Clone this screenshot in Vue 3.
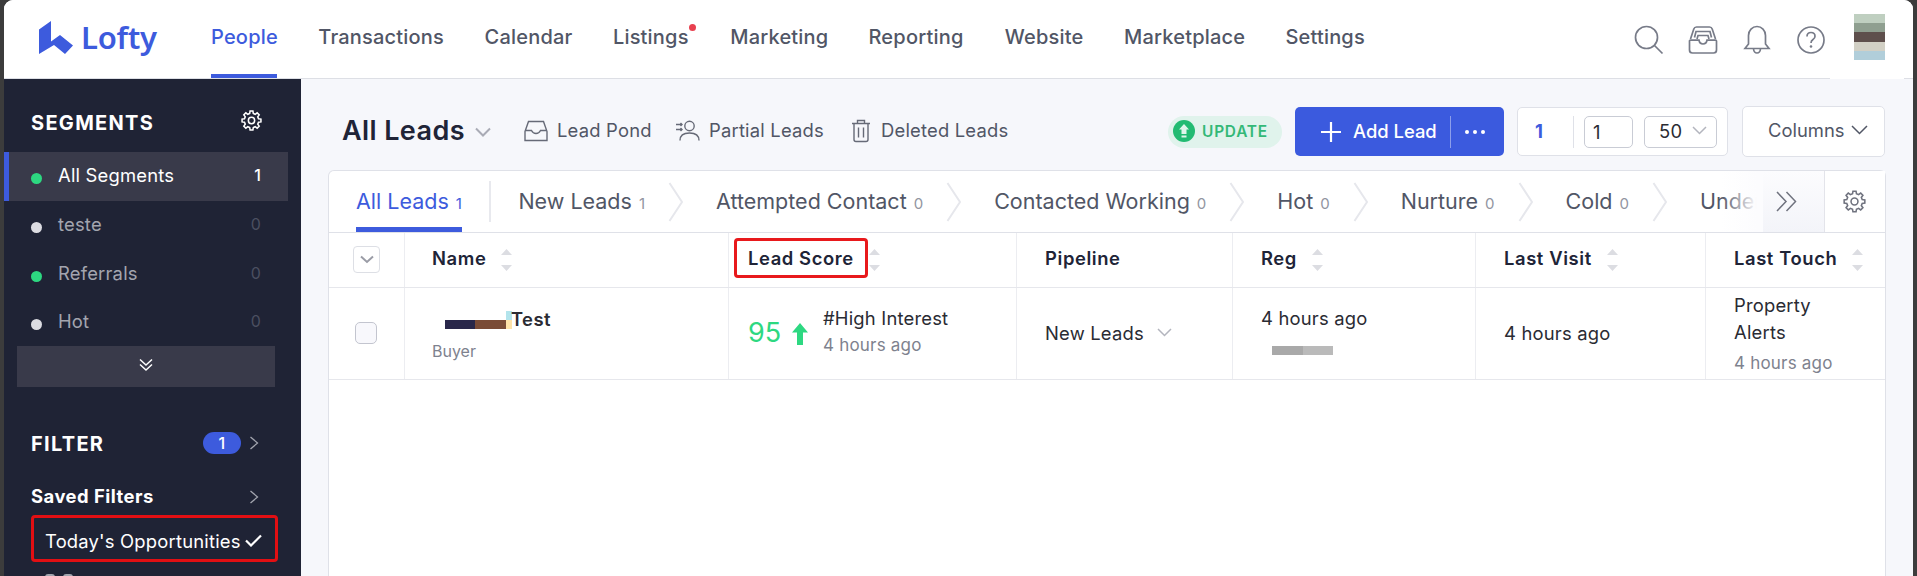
<script setup>
// Main navigation of the CRM
const navItems = [
  { label: 'People', width: 66, active: true },
  { label: 'Transactions', width: 125 },
  { label: 'Calendar', width: 87 },
  { label: 'Listings', width: 76, dot: true },
  { label: 'Marketing', width: 97 },
  { label: 'Reporting', width: 95 },
  { label: 'Website', width: 78 },
  { label: 'Marketplace', width: 120 },
  { label: 'Settings', width: 81 },
]

const segments = [
  { label: 'All Segments', count: 1, color: '#2dd881', active: true },
  { label: 'teste', count: 0, color: '#dcdce2' },
  { label: 'Referrals', count: 0, color: '#2dd881' },
  { label: 'Hot', count: 0, color: '#dcdce2' },
]

// Pipeline stages after the "All Leads" tab
const stages = [
  { label: 'New Leads', count: 1 },
  { label: 'Attempted Contact', count: 0 },
  { label: 'Contacted Working', count: 0 },
  { label: 'Hot', count: 0 },
  { label: 'Nurture', count: 0 },
  { label: 'Cold', count: 0 },
]

const columns = [
  { label: 'Name', sort: true },
  { label: 'Lead Score', sort: true, marked: true },
  { label: 'Pipeline' },
  { label: 'Reg', sort: true },
  { label: 'Last Visit', sort: true },
  { label: 'Last Touch', sort: true },
]

const avatarStripes = ['#bfcfc0', '#8f9f90', '#5e4f4c', '#d2d0c5', '#b1ceda']

// Shared outline of the gear icon
const gearPath = (() => {
  const points = []
  for (let i = 0; i < 8; i++) {
    const base = (i * Math.PI) / 4
    for (const [offset, radius] of [
      [-0.25, 7.6],
      [-0.15, 10],
      [0.15, 10],
      [0.25, 7.6],
    ]) {
      const x = 11 + radius * Math.sin(base + offset)
      const y = 11 - radius * Math.cos(base + offset)
      points.push(`${x.toFixed(2)} ${y.toFixed(2)}`)
    }
  }
  return `M${points.join('L')}Z`
})()
</script>

<template>
  <div class="window">
    <header class="topbar">
      <div class="logo">
        <svg width="34" height="34" viewBox="0 0 34 34">
          <path d="M0 8.5 12 0V20.5L21 14 34 24.5 26 33 15 24 0 33Z" fill="#3d5bdd" />
        </svg>
        <span class="logo-text">Lofty</span>
      </div>

      <nav class="nav">
        <a
          v-for="item in navItems"
          :key="item.label"
          class="nav-item"
          :class="{ active: item.active }"
          :style="{ width: item.width + 'px' }"
        >
          {{ item.label }}
          <i v-if="item.dot" class="nav-dot"></i>
        </a>
      </nav>

      <div class="tools">
        <svg width="30" height="30" viewBox="0 0 30 30">
          <circle cx="12.5" cy="12.5" r="11" />
          <path d="M20.5 20.5 28.5 28.5" />
        </svg>
        <svg width="30" height="30" viewBox="0 0 30 30">
          <path d="M1.5 16V25q0 3 3 3H25.500q3 0 3-3V16q0-.8-1-.8H19q-.5 3.800-4 3.800t-4-3.800H2.500q-1 0-1 .8Z" />
          <path d="M2.500 14 5.800 4q.7-2 2.700-2h13q2 0 2.700 2L27.500 14M6.500 12.500 8 6.500H22L23.500 12.500M9 14 10 10.500H20L21 14" />
        </svg>
        <svg width="30" height="30" viewBox="0 0 30 30">
          <path d="M3 23.5H27L23.5 19V10.500a8.500 9 0 0 0-17 0V19ZM11.500 24q.5 4 3.500 4t3.500-4" />
        </svg>
        <svg width="30" height="30" viewBox="0 0 30 30">
          <circle cx="15" cy="15" r="13" />
          <path d="M11 11.500q0-4 4-4t4 3.700q0 2-2 3.300t-2 3.500" />
          <circle class="solid" cx="15" cy="21.5" r="1.300" />
        </svg>
      </div>

      <div class="avatar-box">
        <div class="avatar">
          <i v-for="c in avatarStripes" :key="c" :style="{ background: c }"></i>
        </div>
      </div>
    </header>

    <div class="body">
      <aside class="sidebar">
        <div class="side-title">
          <span>SEGMENTS</span>
          <svg width="21" height="21" viewBox="0 0 22 22">
            <path :d="gearPath" />
            <circle cx="11" cy="11" r="3.300" />
          </svg>
        </div>

        <ul class="segments">
          <li v-for="s in segments" :key="s.label" :class="{ active: s.active }">
            <i class="seg-dot" :style="{ background: s.color }"></i>
            <span class="seg-label">{{ s.label }}</span>
            <span class="seg-count">{{ s.count }}</span>
          </li>
        </ul>

        <div class="expand">
          <svg width="14" height="14" viewBox="0 0 14 14">
            <path d="M1 1.500 7 7 13 1.500M1 6.500 7 12 13 6.500" />
          </svg>
        </div>

        <div class="filter-title">
          <span class="filter-name">FILTER</span>
          <span class="pill">1</span>
          <svg width="10" height="14" viewBox="0 0 10 14"><path d="M1.500 1 8.500 7 1.500 13" /></svg>
        </div>

        <div class="saved-title">
          <span>Saved Filters</span>
          <svg width="10" height="14" viewBox="0 0 10 14"><path d="M1.500 1 8.500 7 1.500 13" /></svg>
        </div>

        <div class="saved-item">
          <span>Today's Opportunities</span>
          <svg width="17" height="13" viewBox="0 0 17 13"><path d="M1 6.500 6 11.500 16 1.500" /></svg>
        </div>
        <!-- Upper edge of the next filter, mostly below the fold -->
        <div class="saved-next"><i></i><i></i></div>
      </aside>

      <main class="content">
        <div class="toolbar">
          <h1>All Leads</h1>
          <svg class="title-arrow" width="16" height="10" viewBox="0 0 16 10">
            <path d="M1 1.500 8 8.500 15 1.500" />
          </svg>

          <a class="link pond">
            <svg width="24" height="22" viewBox="0 0 24 22">
              <path d="M1 11.500 4.500 1.500H19.500L23 11.500V20.500H1ZM1 10.500H7.500Q9 13.500 12 13.500T16.500 10.500H23" />
            </svg>
            Lead Pond
          </a>
          <a class="link partial">
            <svg width="24" height="22" viewBox="0 0 24 22">
              <circle cx="13.5" cy="6" r="4.700" />
              <path d="M4 20.500q0-7.500 9.500-7.500t9.500 7.500M0 4.500H6M0 9.500H6M4.500 3 6 4.500 4.500 6M4.500 8 6 9.500 4.500 11" />
            </svg>
            Partial Leads
          </a>
          <a class="link deleted">
            <svg width="20" height="24" viewBox="0 0 20 24">
              <path d="M1 4.500H19M6.500 4.500V1.500H13.500V4.500M3 4.500V20.500q0 2 2 2H15q2 0 2-2V4.500M7.500 8.500V18.500M12.500 8.500V18.500" />
            </svg>
            Deleted Leads
          </a>

          <span class="update">
            <svg width="22" height="22" viewBox="0 0 22 22">
              <circle cx="11" cy="11" r="11" fill="#22bb72" />
              <path d="M11 4 16 9.500H13.500V14H8.500V9.500H6ZM8.500 15.500H13.500V17.500H8.500Z" fill="#dff5ea" />
            </svg>
            UPDATE
          </span>

          <button type="button" class="add-lead">
            <svg width="20" height="20" viewBox="0 0 20 20"><path d="M10 0V20M0 10H20" /></svg>
            <span class="add-text">Add Lead</span>
            <span class="add-more"><i></i><i></i><i></i></span>
          </button>

          <div class="pager">
            <b class="pager-current">1</b>
            <span class="pager-input">1</span>
            <span class="pager-select">
              50
              <svg width="15" height="9" viewBox="0 0 15 9"><path d="M1 1 7.500 7.500 14 1" /></svg>
            </span>
          </div>

          <button type="button" class="columns-button">
            Columns
            <svg width="17" height="10" viewBox="0 0 17 10"><path d="M1 1 8.500 8.500 16 1" /></svg>
          </button>
        </div>

        <section class="panel">
          <div class="tabs">
            <div class="tab all">All Leads<small>1</small></div>
            <i class="tab-line"></i>
            <template v-for="s in stages" :key="s.label">
              <div class="tab">{{ s.label }}<small>{{ s.count }}</small></div>
              <svg class="tab-arrow" width="16" height="40" viewBox="0 0 16 40">
                <path d="M1.500 1 14 20 1.500 39" />
              </svg>
            </template>
            <div class="tab">Under</div>

            <!-- Fades out the stages that do not fit -->
            <div class="tabs-end">
              <div class="tabs-fade"></div>
              <div class="tabs-more">
                <svg width="21" height="21" viewBox="0 0 21 21">
                  <path d="M1 1 10 10.500 1 20M10.500 1 19.500 10.500 10.500 20" />
                </svg>
              </div>
              <div class="tabs-gear">
                <svg width="23" height="23" viewBox="0 0 22 22">
                  <path :d="gearPath" />
                  <circle cx="11" cy="11" r="3.300" />
                </svg>
              </div>
            </div>
          </div>

          <div class="grid head">
            <div class="cell check">
              <span class="check-all">
                <svg width="14" height="9" viewBox="0 0 14 9"><path d="M1 1.500 7 7 13 1.500" /></svg>
              </span>
            </div>
            <div v-for="c in columns" :key="c.label" class="cell" :class="{ score: c.marked }">
              <span class="head-label" :class="{ marked: c.marked }">{{ c.label }}</span>
              <svg v-if="c.sort" class="sort" width="11" height="22" viewBox="0 0 11 22">
                <path d="M0 6 5.500 0 11 6ZM0 16H11L5.500 22Z" />
              </svg>
            </div>
          </div>

          <div class="grid row">
            <div class="cell check"><span class="check-box"></span></div>
            <div class="cell name">
              <div class="name-line">
                <i class="mask navy"></i>
                <i class="mask brown"></i>
                <i class="mask tip"></i>
                <b>Test</b>
              </div>
              <div class="buyer">Buyer</div>
            </div>
            <div class="cell score">
              <span class="score-value">95</span>
              <svg width="16" height="22" viewBox="0 0 16 22">
                <path d="M8 0 16 9.500H11V22H5V9.500H0Z" fill="#2dd881" />
              </svg>
              <div class="score-text">
                <div>#High Interest</div>
                <div class="muted">4 hours ago</div>
              </div>
            </div>
            <div class="cell pipeline">
              New Leads
              <svg width="15" height="9" viewBox="0 0 15 9"><path d="M1 1 7.500 7.500 14 1" /></svg>
            </div>
            <div class="cell reg">
              <div>4 hours ago</div>
              <div class="reg-mask"><i></i><i></i></div>
            </div>
            <div class="cell">4 hours ago</div>
            <div class="cell touch">
              <div>Property<br />Alerts</div>
              <div class="muted">4 hours ago</div>
            </div>
          </div>
        </section>
      </main>
    </div>
  </div>
</template>

<style>
body {
  background: #3c3c3c;
}
</style>

<style scoped>
* {
  box-sizing: border-box;
}

svg {
  flex-shrink: 0;
  fill: none;
}

.window {
  display: flex;
  flex-direction: column;
  width: 1909px;
  height: 576px;
  margin-left: 4px;
  overflow: hidden;

  border-radius: 9px 9px 0 0;
  background: #f6f7fb;

  color: #2a2b33;
  font-family: Inter, 'Liberation Sans', sans-serif;
  font-size: 18.4px;
  letter-spacing: 0.2px;
  white-space: nowrap;
}

/* ---------- Top bar ---------- */

.topbar {
  display: flex;
  flex-shrink: 0;
  height: 79px;

  border-bottom: 1px solid #dddfe5;
  background: #fff;
}

.logo {
  display: flex;
  width: 207px;
  padding: 21px 0 0 35px;
}

.logo-text {
  margin: -6px 0 0 8px;

  color: #3d5bdd;
  font-family: 'Noto Sans', sans-serif;
  font-size: 31px;
  font-weight: 600;
  line-height: 44px;
  letter-spacing: -0.3px;
}

.nav {
  display: flex;
  gap: 41.3px;
}

.nav-item {
  position: relative;
  height: 78px;

  color: #515666;
  font-size: 20px;
  font-weight: 500;
  line-height: 74px;
}

.nav-item.active {
  border-bottom: 4px solid #3d5bdd;
  color: #3d5bdd;
}

.nav-dot {
  position: absolute;
  top: 24px;
  right: -7px;
  width: 7px;
  height: 7px;

  border-radius: 50%;
  background: #e8404f;
}

.tools {
  display: flex;
  gap: 24px;
  margin-left: auto;
  padding-top: 25px;
}

.tools svg {
  stroke: #777b88;
  stroke-width: 1.7;
}

.tools .solid {
  fill: #777b88;
  stroke: none;
}

.avatar-box {
  width: 74px;
  height: 79px;
  margin: 0 9px 0 4px;
  padding: 14px 0 0 24px;

  background: #fff;
}

.avatar {
  display: flex;
  flex-direction: column;
  width: 31px;
  height: 46px;
}

.avatar i {
  flex: 1;
}

/* ---------- Sidebar ---------- */

.body {
  display: flex;
  flex: 1;
  min-height: 0;
}

.sidebar {
  flex-shrink: 0;
  width: 297px;
  overflow: hidden;

  background: #1f2335;
  color: #fff;
}

.side-title {
  display: flex;
  align-items: center;
  justify-content: space-between;
  height: 73px;
  padding: 14px 39px 0 27px;

  font-size: 20px;
  font-weight: 700;
  letter-spacing: 1.3px;
}

.side-title svg {
  margin-top: -4px;
  stroke: #fff;
  stroke-width: 1.6;
}

.segments {
  margin: 0;
  padding: 0;
  list-style: none;
}

.segments li {
  display: flex;
  align-items: center;
  width: 284px;
  height: 48.7px;
  padding: 0 27px;

  color: #a3a5af;
}

.segments li.active {
  border-left: 5px solid #3d5bdd;
  padding-left: 22px;
  background: #393a4a;
  color: #fff;
}

.seg-dot {
  width: 11px;
  height: 11px;
  margin-top: 5px;

  border-radius: 50%;
}

.seg-label {
  margin-top: -2px;
  margin-left: 16px;
}

.seg-count {
  margin-top: -2px;
  margin-left: auto;

  color: #4b4f60;
  font-size: 16px;
}

.active .seg-count {
  color: #fff;
  font-weight: 500;
}

.expand {
  display: flex;
  justify-content: center;
  width: 258px;
  height: 41px;
  margin: -1px 0 0 13px;
  padding-top: 12px;

  background: #393a4a;
}

.expand svg {
  stroke: #fff;
  stroke-width: 1.5;
}

.filter-title,
.saved-title {
  display: flex;
  align-items: center;
  padding: 0 42px 0 27px;
}

.filter-title {
  height: 24px;
  margin-top: 44px;
}

.filter-name {
  padding-top: 2px;

  font-size: 20px;
  font-weight: 700;
  letter-spacing: 1.3px;
}

.filter-title svg,
.saved-title svg {
  stroke: #a3a5af;
  stroke-width: 1.3;
}

.pill {
  width: 38px;
  height: 22px;
  margin: 0 8px 0 auto;

  border-radius: 11px;
  background: #3d5bdd;

  font-size: 16px;
  font-weight: 500;
  line-height: 22px;
  text-align: center;
}

.saved-title {
  justify-content: space-between;
  height: 24px;
  margin-top: 30px;

  font-weight: 700;
  letter-spacing: 0.5px;
}

.saved-title span {
  padding-bottom: 1px;
}

.saved-item {
  display: flex;
  align-items: center;
  justify-content: space-between;
  width: 247px;
  height: 47px;
  margin: 6px 0 0 27px;
  padding: 5px 13px 0 11px;

  border: 3px solid #e20f13;
  border-radius: 4px;
}

.saved-item svg {
  stroke: #fff;
  stroke-width: 2.2;
}

.saved-next {
  display: flex;
  gap: 8px;
  margin: 12px 0 0 41px;
}

.saved-next i {
  width: 10px;
  height: 4px;

  border-radius: 3px 3px 0 0;
  background: #a3a5af;
}

/* ---------- Toolbar ---------- */

.content {
  display: flex;
  flex: 1;
  flex-direction: column;
  min-width: 0;
  padding: 0 28px 0 27px;
}

.toolbar {
  display: flex;
  flex-shrink: 0;
  align-items: center;
  height: 91px;
  padding: 14px 0 0 14px;

  color: #515666;
}

h1 {
  width: 122px;
  margin: 0;
  padding-bottom: 2px;

  color: #202437;
  font-size: 27px;
  font-weight: 600;
  line-height: 32px;
  letter-spacing: 0.4px;
}

.title-arrow {
  margin-left: 11px;
  stroke: #a9abb5;
  stroke-width: 2;
}

.link {
  display: flex;
  align-items: center;
  gap: 9px;
  padding-bottom: 3px;
}

.link svg {
  margin-top: 1px;
  stroke: #666a77;
  stroke-width: 1.4;
}

.pond {
  width: 152px;
  margin-left: 33px;
}

.partial {
  width: 175px;
}

.deleted {
  gap: 10px;
}

.update {
  display: flex;
  align-items: center;
  gap: 7px;
  width: 114px;
  height: 32px;
  margin-left: auto;
  padding: 0 0 1px 5px;

  border-radius: 16px;
  background: #e0f3ec;

  color: #33b877;
  font-size: 15.4px;
  font-weight: 600;
  letter-spacing: 0.8px;
}

.add-lead {
  display: flex;
  align-items: center;
  width: 209px;
  height: 49px;
  margin-left: 13px;
  padding: 0 0 0 26px;

  border: none;
  border-radius: 5px;
  background: #3b5ade;

  color: #fff;
  font: inherit;
  font-weight: 500;
  letter-spacing: 0;
}

.add-lead svg {
  stroke: #fff;
  stroke-width: 2.2;
}

.add-text {
  width: 97px;
  margin-left: 12px;
  padding-bottom: 2px;
  text-align: left;
}

.add-more {
  display: flex;
  align-items: center;
  gap: 4px;
  height: 32px;
  padding-left: 14px;

  border-left: 1px solid #8c9eeb;
}

.add-more i {
  width: 4px;
  height: 4px;

  border-radius: 50%;
  background: #fff;
}

.pager {
  display: flex;
  align-items: center;
  width: 211px;
  height: 49px;
  margin-left: 13px;

  border: 1px solid #dfe1e8;
  border-radius: 5px;
  background: #fff;
}

.pager-current {
  width: 56px;
  height: 32px;
  padding-left: 17px;

  border-right: 1px solid #dfe1e8;

  color: #3d5bdd;
  font-weight: 700;
  line-height: 30px;
}

.pager-input,
.pager-select {
  height: 32px;

  border: 1px solid #c9ccd5;
  border-radius: 5px;

  color: #2a2b33;
  line-height: 30px;
}

.pager-input {
  width: 49px;
  margin: 0 11px 0 10px;
  padding-left: 8px;
}

.pager-select {
  display: flex;
  align-items: center;
  justify-content: space-between;
  width: 73px;
  padding: 0 9px 2px 14px;
}

.pager-select svg,
.pipeline svg {
  stroke: #b3b5be;
  stroke-width: 1.5;
}

.columns-button {
  display: flex;
  align-items: center;
  justify-content: space-between;
  width: 143px;
  height: 51px;
  margin-left: 14px;
  padding: 0 16px 3px 25px;

  border: 1px solid #dfe1e8;
  border-radius: 5px;
  background: #fff;

  color: #515666;
  font: inherit;
  letter-spacing: 0;
}

.columns-button svg {
  stroke: #515666;
  stroke-width: 1.5;
}

/* ---------- Tabs ---------- */

.panel {
  flex: 1;
  width: 1558px;

  border: 1px solid #dfe1e8;
  border-bottom: none;
  border-radius: 6px 6px 0 0;
  background: #fff;
}

.tabs {
  position: relative;
  display: flex;
  align-items: center;
  height: 62px;
  padding-left: 27px;
  overflow: hidden;

  border-bottom: 1px solid #dfe1e8;

  color: #515666;
  font-size: 21.5px;
  letter-spacing: 0;
}

.tab {
  flex-shrink: 0;
  height: 61px;
  line-height: 60px;
}

.tab small {
  margin-left: 7px;

  color: #9295a1;
  font-size: 15px;
}

.tab.all,
.tab.all small {
  color: #3d5bdd;
}

.tab.all {
  border-bottom: 5px solid #3d5bdd;
}

.tab-line {
  width: 2px;
  height: 41px;
  margin: 0 27.5px 0 27px;

  background: #e8e9ee;
}

.tab-arrow {
  margin: 0 32px 0 23px;

  stroke: #e6e7ec;
  stroke-width: 2;
}

.tabs-end {
  position: absolute;
  top: 0;
  right: 0;

  display: flex;
  height: 61px;
}

.tabs-fade {
  width: 42px;
  background: linear-gradient(90deg, rgba(255, 255, 255, 0), #fcfcfe 85%);
}

.tabs-more,
.tabs-gear {
  display: flex;
  align-items: center;
  height: 61px;
}

.tabs-more {
  width: 61px;
  padding-left: 13px;

  background: linear-gradient(#fcfcfe, #f3f4f9);
}

.tabs-gear {
  width: 61px;
  padding-left: 18px;

  border-left: 1px solid #e3e4ea;
  background: #fff;
}

.tabs-end svg {
  stroke: #70737f;
  stroke-width: 1.5;
}

/* ---------- Table ---------- */

.grid {
  display: grid;
  grid-template-columns: 76px 324px 288px 216px 243px 230px 179px;

  border-bottom: 1px solid #e6e7ec;
}

.cell {
  display: flex;
  align-items: center;
  padding-left: 28px;

  border-right: 1px solid #ecedf1;
}

.cell:nth-child(2) {
  padding-left: 27px;
}

.cell:last-child {
  border-right: none;
}

.cell.score {
  padding-left: 19px;
}

.head {
  height: 55px;

  color: #202437;
  font-weight: 600;
  letter-spacing: 0.6px;
}

.head .cell {
  padding-bottom: 4px;
}

.row .cell {
  padding-bottom: 2px;
}

.cell.check {
  justify-content: center;
  padding: 0 0 1px;
}

.head .cell.check {
  padding: 0 0 1px;
}

.row .cell.check {
  padding: 0 2px 1px 0;
}

.check-all {
  display: flex;
  align-items: center;
  justify-content: center;
  width: 27px;
  height: 27px;

  border: 1px solid #dddfe5;
  border-radius: 4px;
}

.check-all svg {
  stroke: #9a9ca6;
  stroke-width: 2;
}

.head-label {
  position: relative;
}

/* Highlight frame around the header label */
.head-label.marked::after {
  content: '';
  position: absolute;
  inset: -9px -14px -9px -14px;

  border: 3px solid #e8191c;
  border-radius: 4px;
}

.sort {
  margin: 3px 0 0 15px;
  fill: #dcdde2;
}

.row {
  height: 92px;
}

.check-box {
  width: 22px;
  height: 22px;

  border: 1px solid #c3c5cf;
  border-radius: 5px;
  background: #f8f8fc;
}

.name,
.reg,
.touch {
  flex-direction: column;
  align-items: flex-start;
}

.name-line {
  display: flex;
  align-items: flex-end;
  height: 32px;
  margin-top: 12px;
  padding-left: 13px;
}

.name-line b {
  margin-left: -1px;
  font-weight: 600;
  line-height: 25px;
  letter-spacing: 0.4px;
}

.mask {
  width: 31px;
  height: 9px;
  margin-bottom: 3px;
}

.mask.navy {
  width: 30px;
  background: #29274a;
}

.mask.brown {
  background: #7a4b36;
}

.mask.tip {
  width: 6px;
  height: 18px;
  background: linear-gradient(#b3e4ec 50%, #fde2a9 50%);
}

.buyer {
  margin-top: 9px;

  color: #7e828e;
  font-size: 16px;
  line-height: 20px;
  letter-spacing: 0;
}

.score-value {
  width: 32px;

  color: #2dd881;
  font-size: 27px;
  letter-spacing: 0;
}

.score svg:not(.sort) {
  margin: 2px 15px 0 12px;
}

.score-text {
  margin-top: -1px;
  line-height: 27px;
}

.muted {
  color: #7e828e;
  font-size: 17px;
}

.pipeline svg {
  margin-left: 13px;
}

.row .reg,
.row .touch {
  justify-content: flex-start;
  line-height: 27px;
}

.row .reg {
  padding-top: 17px;
}

.reg-mask {
  display: flex;
  margin: 14px 0 0 11px;
}

.reg-mask i {
  width: 31px;
  height: 9px;
  background: #a9a9a9;
}

.reg-mask i + i {
  width: 30px;
  background: #bababa;
}

.row .touch {
  padding-top: 4px;
}

.touch .muted {
  margin-top: 4px;
}
</style>
